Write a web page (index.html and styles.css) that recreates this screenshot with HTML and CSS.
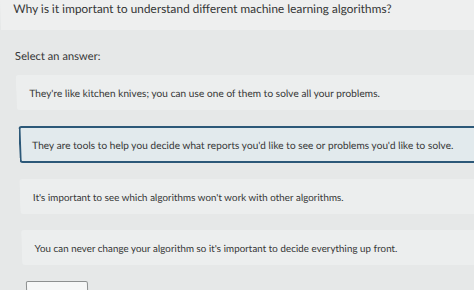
FILE: index.html
```html
<!DOCTYPE html>
<html lang="en">
<head>
    <meta charset="UTF-8">
    <meta name="viewport" content="width=device-width, initial-scale=1.0">
    <title>Quiz</title>
    <link rel="stylesheet" href="styles.css">
</head>
<body>

<div class="page">
    <div class="question">
        <h1>Why is it important to understand different machine learning algorithms?</h1>
    </div>

    <div class="answers">
        <p class="prompt">Select an answer:</p>

        <div class="option">They're like kitchen knives; you can use one of them to solve all your problems.</div>
        <div class="option selected">They are tools to help you decide what reports you'd like to see or problems you'd like to solve.</div>
        <div class="option">It's important to see which algorithms won't work with other algorithms.</div>
        <div class="option">You can never change your algorithm so it's important to decide everything up front.</div>

        <button class="submit" aria-label="Submit"></button>
    </div>
</div>

</body>
</html>
```

FILE: styles.css
```css
* { margin: 0; padding: 0; box-sizing: border-box; }
html, body { height: 100%; overflow: hidden; }
body {
    font-family: Lato, "Open Sans", sans-serif;
    background: #e6e8e8;
    color: #363737;
}
.page {
    width: 520px;
    transform: skewX(2deg);
    transform-origin: 0 0;
}
.question {
    background: #eeefef;
    height: 30px;
    padding: 0 13px;
}
.question h1 {
    font-size: 11.9px;
    font-weight: 400;
    line-height: 17px;
}
.answers {
    padding: 18px 0 0 13px;
}
.prompt {
    font-size: 11.2px;
    line-height: 16px;
    margin: 0 0 11px 0;
}
.option {
    background: #eceeee;
    font-size: 10.2px;
    line-height: 14px;
    padding: 9px 11px 10px;
    height: 35px;
    margin-bottom: 16px;
    border: 2px solid transparent;
    border-right: none;
    border-radius: 3px 0 0 3px;
}
.option.selected {
    background: #e2eaed;
    border-color: #2c5878;
    margin-left: 1px;
    padding-top: 10px;
    height: 37px;
}
.option:nth-child(4),
.option:nth-child(5) {
    font-size: 9.9px;
}
.submit {
    display: block;
    width: 62px;
    height: 28px;
    margin: 13px 0 0 3px;
    background: #f6f7f7;
    border: 1px solid #8d9090;
    border-radius: 2px;
}
```
